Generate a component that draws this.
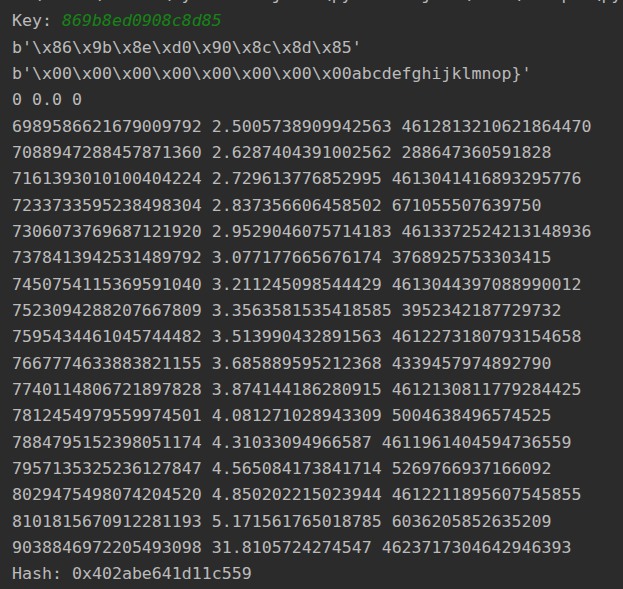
const rows = [
  '6989586621679009792 2.5005738909942563 4612813210621864470',
  '7088947288457871360 2.6287404391002562 288647360591828',
  '7161393010100404224 2.729613776852995 4613041416893295776',
  '7233733595238498304 2.837356606458502 671055507639750',
  '7306073769687121920 2.9529046075714183 4613372524213148936',
  '7378413942531489792 3.077177665676174 3768925753303415',
  '7450754115369591040 3.211245098544429 4613044397088990012',
  '7523094288207667809 3.3563581535418585 3952342187729732',
  '7595434461045744482 3.513990432891563 4612273180793154658',
  '7667774633883821155 3.685889595212368 4339457974892790',
  '7740114806721897828 3.874144186280915 4612130811779284425',
  '7812454979559974501 4.081271028943309 5004638496574525',
  '7884795152398051174 4.31033094966587 4611961404594736559',
  '7957135325236127847 4.565084173841714 5269766937166092',
  '8029475498074204520 4.850202215023944 4612211895607545855',
  '8101815670912281193 5.171561765018785 6036205852635209',
  '9038846972205493098 31.8105724274547 4623717304642946393',
]

export default function App() {
  return (
    <div className="h-[589px] w-[623px] overflow-hidden bg-[#2b2b2b]">
      <div className="-mt-[18px] pl-[12px] font-['DejaVu_Sans_Mono',monospace] text-[16.6px] leading-[26.33px] whitespace-pre text-[#bbbbbb]">
        <div>{'C:\\Users\\Mamaz1\\PycharmProjects\\pythonProject\\venv\\Scripts\\python.exe'}</div>
        <div>
          Key: <span className="italic text-[#168416]">869b8ed0908c8d85</span>
        </div>
        <div>{"b'\\x86\\x9b\\x8e\\xd0\\x90\\x8c\\x8d\\x85'"}</div>
        <div>{"b'\\x00\\x00\\x00\\x00\\x00\\x00\\x00\\x00abcdefghijklmnop}'"}</div>
        <div>0 0.0 0</div>
        {rows.map((r) => (
          <div key={r}>{r}</div>
        ))}
        <div>Hash: 0x402abe641d11c559</div>
      </div>
    </div>
  )
}
